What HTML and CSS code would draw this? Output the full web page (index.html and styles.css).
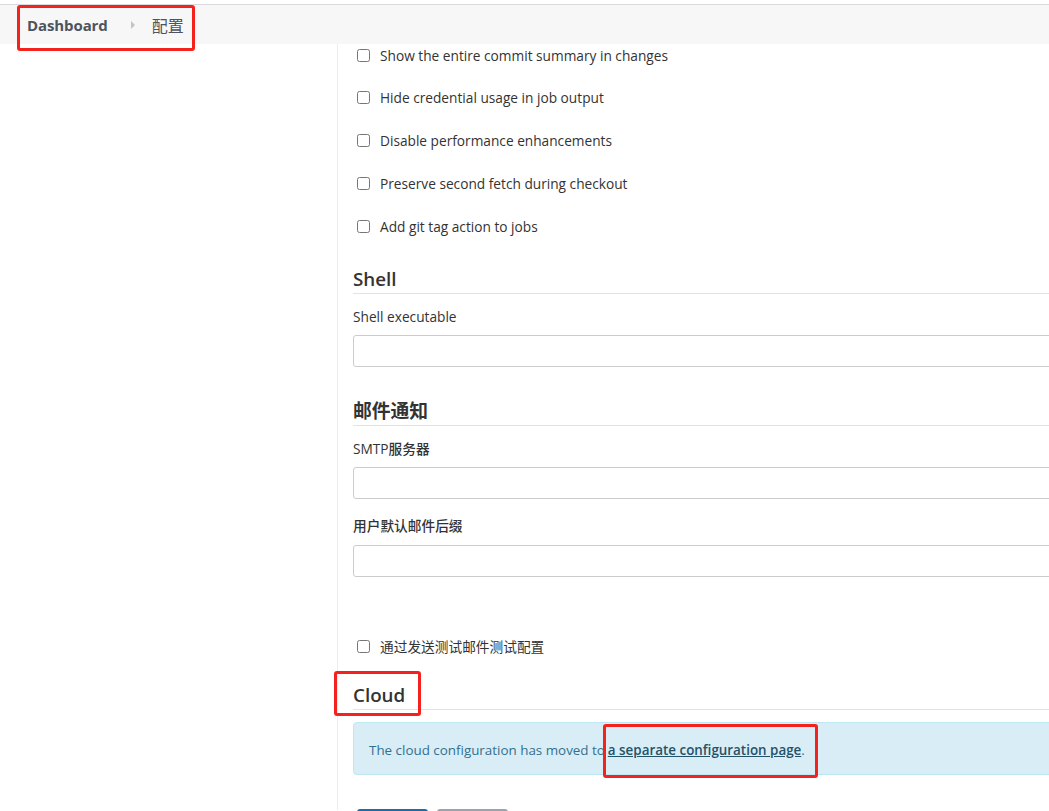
FILE: index.html
```html
<!DOCTYPE html>
<html lang="zh-CN">
<head>
    <meta charset="UTF-8">
    <meta name="viewport" content="width=device-width, initial-scale=1.0">
    <title>配置 [Jenkins]</title>
    <link rel="stylesheet" href="styles.css">
</head>
<body>
    <header class="topbar">
        <nav class="breadcrumbs">
            <a class="crumb crumb-root" href="#">Dashboard</a>
            <span class="crumb-sep"></span>
            <a class="crumb" href="#">配置</a>
        </nav>
    </header>
    <div class="page">
        <aside class="side"></aside>
        <main class="main">
            <div class="checks">
                <label class="check"><input type="checkbox"> Show the entire commit summary in changes</label>
                <label class="check"><input type="checkbox"> Hide credential usage in job output</label>
                <label class="check"><input type="checkbox"> Disable performance enhancements</label>
                <label class="check"><input type="checkbox"> Preserve second fetch during checkout</label>
                <label class="check"><input type="checkbox"> Add git tag action to jobs</label>
            </div>

            <section class="section">
                <h2 class="section-title">Shell</h2>
                <div class="field">
                    <div class="field-label">Shell executable</div>
                    <input class="text-input" type="text">
                </div>
            </section>

            <section class="section">
                <h2 class="section-title cjk">邮件通知</h2>
                <div class="field">
                    <div class="field-label">SMTP服务器</div>
                    <input class="text-input" type="text">
                </div>
                <div class="field">
                    <div class="field-label">用户默认邮件后缀</div>
                    <input class="text-input" type="text">
                </div>
                <label class="check check-test"><input type="checkbox"> 通过发送测试邮件测试配置</label>
            </section>

            <section class="section section-cloud">
                <h2 class="section-title">Cloud</h2>
                <div class="alert">
                    The cloud configuration has moved to <a href="#">a separate configuration page</a>.
                </div>
            </section>

            <!-- save / apply, only their top edge is in view -->
            <div class="buttons">
                <button class="btn btn-primary" aria-label="保存"></button>
                <button class="btn btn-secondary" aria-label="应用"></button>
            </div>
        </main>
    </div>

    <!-- annotation boxes drawn on the screenshot -->
    <div class="mark mark-crumbs"></div>
    <div class="mark mark-cloud"></div>
    <div class="mark mark-link"></div>
</body>
</html>
```

FILE: styles.css
```css
:root {
    font-family: "Open Sans", "Noto Sans CJK SC", sans-serif;
    font-size: 13.7px;
    color: #333333;
    background-color: #ffffff;
}
html, body {
    height: 811px;
    overflow: hidden;
}
body {
    margin: 0;
    position: relative;
}

.topbar {
    margin-top: 4px;
    border-top: 1px solid #d9d9de;
    background-color: #f7f7f8;
    height: 39px;
    display: flex;
    align-items: center;
    padding-left: 27px;
}
.breadcrumbs {
    display: flex;
    align-items: center;
}
.crumb, .crumb:visited {
    color: #4d545d;
    text-decoration: none;
    font-size: 16px;
}
.crumb-root {
    font-size: 15px;
    font-weight: 700;
    letter-spacing: -0.1px;
}
.crumb-sep {
    width: 0;
    height: 0;
    border-top: 4px solid transparent;
    border-bottom: 4px solid transparent;
    border-left: 4px solid #c4c4c8;
    margin: 0 17px 0 23px;
}

.page {
    display: flex;
    height: 766px;
}
.side {
    width: 337px;
    flex: none;
    border-right: 1px solid #ededed;
}
.main {
    flex: none;
    width: 720px;
    padding-left: 15px;
}

.checks {
    display: flex;
    flex-direction: column;
    gap: 20.75px;
}
.check {
    display: flex;
    align-items: center;
    height: 22px;
    padding-left: 4px;
}
.check input {
    width: 13px;
    height: 13px;
    margin: 0 10px 0 0;
}

.section {
    margin-top: 29px;
}
.section + .section {
    margin-top: 31px;
}
.section-title {
    margin: 0;
    font-size: 18.8px;
    font-weight: 600;
    line-height: 27px;
    border-bottom: 1px solid #e3e3e3;
    color: #333333;
}
.section-title.cjk {
    font-weight: 700;
}
.field {
    margin-top: 13px;
}
.field + .field {
    margin-top: 17px;
}
.field-label {
    line-height: 20px;
    margin-bottom: 8px;
    font-weight: 500;
}
.field + .field .field-label {
    margin-bottom: 9px;
}
.text-input {
    display: block;
    box-sizing: border-box;
    width: 100%;
    height: 32px;
    border: 1px solid #cccccc;
    border-radius: 3px;
    margin: 0;
    font-family: inherit;
}
.check-test {
    margin-top: 58px;
}

.section.section-cloud {
    margin-top: 25px;
}
.alert {
    margin-top: 12px;
    box-sizing: border-box;
    height: 53px;
    display: flex;
    align-items: center;
    padding: 2px 15px 0;
    background-color: #d9edf7;
    border: 1px solid #bce8f1;
    border-radius: 4px;
    color: #31708f;
    font-size: 13.4px;
}
.alert a, .alert a:visited {
    color: #245269;
    font-weight: 600;
    text-decoration: underline;
    margin-left: 3px;
}

.buttons {
    margin-top: 34px;
    padding-left: 4px;
    display: flex;
    gap: 9px;
}
.btn {
    width: 71px;
    height: 30px;
    border: 0;
    border-radius: 3px;
    color: #ffffff;
    font-family: inherit;
}
.btn-primary {
    background-color: #1b6eab;
}
.btn-secondary {
    background-color: #9ba4ad;
}

.mark {
    position: absolute;
    box-sizing: border-box;
    border: 3px solid #f5211d;
    border-radius: 3px;
}
.mark-crumbs {
    left: 17px;
    top: 5px;
    width: 178px;
    height: 46px;
}
.mark-cloud {
    left: 334px;
    top: 671px;
    width: 87px;
    height: 45px;
}
.mark-link {
    left: 603px;
    top: 724px;
    width: 215px;
    height: 54px;
}
```
